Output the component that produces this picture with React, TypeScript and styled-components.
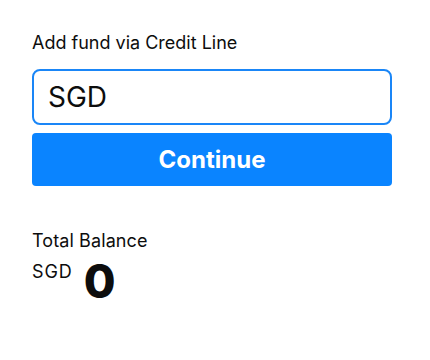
import React from "react";
import styled, { createGlobalStyle } from "styled-components";

const Global = createGlobalStyle`
  html, body { margin: 0; padding: 0; background: #ffffff; }
  body { font-family: Inter, "Noto Sans", sans-serif; color: #0d0d0d; }
`;

const Page = styled.div`
  padding: 31px 38px 0 32px;
  display: flex;
  flex-direction: column;
  width: 360px;
`;

const Label = styled.div`
  font-size: 18px;
  line-height: 24px;
  margin-bottom: 14px;
`;

const Input = styled.input`
  box-sizing: border-box;
  width: 100%;
  height: 56px;
  border: 2px solid #1a86f7;
  border-radius: 8px;
  padding: 0 14px;
  font-family: Inter, "Noto Sans", sans-serif;
  font-size: 28px;
  color: #0d0d0d;
  outline: none;
  background: #fff;
`;

const Button = styled.button`
  margin-top: 8px;
  height: 53px;
  width: 100%;
  border: none;
  border-radius: 4px;
  background: #0a84ff;
  color: #ffffff;
  font-family: Inter, "Noto Sans", sans-serif;
  font-weight: 700;
  font-size: 24px;
  cursor: pointer;
`;

const BalanceLabel = styled.div`
  margin-top: 43px;
  font-size: 18px;
  line-height: 24px;
  letter-spacing: 0.1px;
`;

const BalanceRow = styled.div`
  display: flex;
  align-items: flex-start;
  gap: 11px;
`;

const Currency = styled.span`
  font-size: 18px;
  line-height: 24px;
  letter-spacing: 0.9px;
  margin-top: 7px;
`;

const Amount = styled.span`
  font-size: 46px;
  font-weight: 800;
  line-height: 46px;
  margin-top: 5px;
`;

export default function App() {
  return (
    <>
      <Global />
      <Page>
        <Label>Add fund via Credit Line</Label>
        <Input defaultValue="SGD" />
        <Button>Continue</Button>
        <BalanceLabel>Total Balance</BalanceLabel>
        <BalanceRow>
          <Currency>SGD</Currency>
          <Amount>0</Amount>
        </BalanceRow>
      </Page>
    </>
  );
}
